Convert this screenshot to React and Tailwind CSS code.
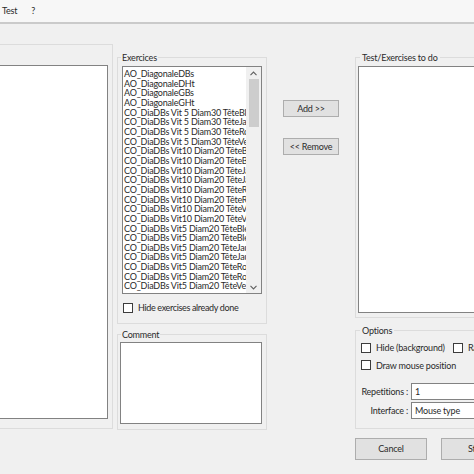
import React from "react";

const exercises = [
  "AO_DiagonaleDBs",
  "AO_DiagonaleDHt",
  "AO_DiagonaleGBs",
  "AO_DiagonaleGHt",
  "CO_DiaDBs Vit 5 Diam30 TêteBleu",
  "CO_DiaDBs Vit 5 Diam30 TêteJaune",
  "CO_DiaDBs Vit 5 Diam30 TêteRose",
  "CO_DiaDBs Vit 5 Diam30 TêteVerte",
  "CO_DiaDBs Vit10 Diam20 TêteBleu",
  "CO_DiaDBs Vit10 Diam20 TêteBleu",
  "CO_DiaDBs Vit10 Diam20 TêteJaune",
  "CO_DiaDBs Vit10 Diam20 TêteJaune",
  "CO_DiaDBs Vit10 Diam20 TêteRose",
  "CO_DiaDBs Vit10 Diam20 TêteRose",
  "CO_DiaDBs Vit10 Diam20 TêteVerte",
  "CO_DiaDBs Vit10 Diam20 TêteVerte",
  "CO_DiaDBs Vit5 Diam20 TêteBleu",
  "CO_DiaDBs Vit5 Diam20 TêteBleu",
  "CO_DiaDBs Vit5 Diam20 TêteJaune",
  "CO_DiaDBs Vit5 Diam20 TêteJaune",
  "CO_DiaDBs Vit5 Diam20 TêteRose",
  "CO_DiaDBs Vit5 Diam20 TêteRose",
  "CO_DiaDBs Vit5 Diam20 TêteVerte",
];

const Check = ({ label, className = "" }) => (
  <div className={`flex items-center gap-[5px] ${className}`}>
    <span className="w-[10px] h-[10px] bg-white border border-[#3c3c3c] shrink-0" />
    <span className="whitespace-nowrap">{label}</span>
  </div>
);

const Button = ({ children, className = "" }) => (
  <div className={`flex items-center justify-center bg-[#e1e1e1] border border-[#adadad] ${className}`}>
    {children}
  </div>
);

const Chevron = ({ up }) => (
  <svg width="7" height="5" viewBox="0 0 7 5" className="shrink-0">
    <path d={up ? "M0.5 4.2 L3.5 1 L6.5 4.2" : "M0.5 0.8 L3.5 4 L6.5 0.8"} fill="none" stroke="#606060" strokeWidth="1.1" />
  </svg>
);

export default function App() {
  return (
    <div
      className="w-[474px] h-[474px] overflow-hidden bg-[#f0f0f0] text-[9px] text-[#2a2a2a] tracking-[-0.2px]"
      style={{ fontFamily: "Lato, 'Liberation Sans', sans-serif" }}
    >
      {/* menu */}
      <div className="h-[24px] bg-[#f7f7f7] border-b-2 border-[#cacaca] flex items-center gap-[14px] pl-[2px] pb-[1px]">
        <span>Test</span>
        <span>?</span>
      </div>

      <div className="flex">
        {/* left group */}
        <div className="-ml-[90px] w-[203px] mt-[20px] h-[385px] border border-[#dcdcdc] pt-[20px] pr-[4px] pb-[9px] pl-[6px] shrink-0">
          <div className="w-full h-full bg-white border border-[#828282]" />
        </div>

        {/* middle column */}
        <div className="ml-[4px] w-[150px] shrink-0 flex flex-col">
          <fieldset className="mt-[28px] h-[272px] border border-[#dcdcdc]">
            <legend className="ml-[3px] px-[1px] leading-[11px]">Exercices</legend>
            <div className="ml-[4px] mt-[3px] w-[140px] h-[228px] bg-white border border-[#828282] flex overflow-hidden">
              <div className="flex-1 min-w-0 pl-[1px] pt-[2px] leading-[9.65px] overflow-hidden">
                {exercises.map((e, i) => (
                  <div key={i} className="whitespace-nowrap">{e}</div>
                ))}
              </div>
              <div className="w-[15px] bg-[#f0f0f0] flex flex-col items-center">
                <div className="h-[12px] flex items-center"><Chevron up /></div>
                <div className="w-[10px] h-[48px] bg-[#cdcdcd]" />
                <div className="flex-1" />
                <div className="h-[12px] flex items-center"><Chevron /></div>
              </div>
            </div>
            <Check label="Hide exercises already done" className="ml-[5px] mt-[7px] tracking-[-0.35px]" />
          </fieldset>

          <fieldset className="mt-[5px] h-[101px] border border-[#dcdcdc]">
            <legend className="ml-[3px] px-[1px] leading-[11px]">Comment</legend>
            <div className="ml-[2px] mt-[2px] w-[142px] h-[82px] bg-white border border-[#828282]" />
          </fieldset>
        </div>

        {/* buttons */}
        <div className="w-[88px] shrink-0 pl-[16px] pt-[76px] flex flex-col gap-[21px]">
          <Button className="w-[56px] h-[17px]">Add &gt;&gt;</Button>
          <Button className="w-[56px] h-[17px]">&lt;&lt; Remove</Button>
        </div>

        {/* right column */}
        <div className="w-[160px] shrink-0 flex flex-col">
          <fieldset className="mt-[28px] h-[266px] border border-[#dcdcdc]">
            <legend className="ml-[4px] px-[2px] leading-[11px]">Test/Exercises to do</legend>
            <div className="ml-[2px] mt-[3px] h-[247px] bg-white border border-[#828282]" />
          </fieldset>

          <fieldset className="mt-[7px] h-[104px] border border-[#dcdcdc] pl-[5px]">
            <legend className="ml-[-1px] px-[2px] leading-[11px]">Options</legend>
            <div className="flex mt-[5px]">
              <Check label="Hide (background)" className="w-[92px]" />
              <Check label="Random" />
            </div>
            <Check label="Draw mouse position" className="mt-[4px]" />
            <div className="mt-[11px] flex items-center">
              <span className="w-[50px] text-right pr-[3px] whitespace-nowrap">Repetitions :</span>
              <div className="flex-1 h-[17px] bg-white border border-[#828282] flex items-center pl-[3px]">1</div>
            </div>
            <div className="mt-[2px] flex items-center">
              <span className="w-[50px] text-right pr-[3px] whitespace-nowrap">Interface :</span>
              <div className="flex-1 h-[17px] bg-white border border-[#828282] flex items-center pl-[3px]">Mouse type</div>
            </div>
          </fieldset>

          <div className="mt-[9px] flex gap-[14px]">
            <Button className="w-[72px] h-[22px]">Cancel</Button>
            <Button className="w-[72px] h-[22px]">Start</Button>
          </div>
        </div>
      </div>
    </div>
  );
}
